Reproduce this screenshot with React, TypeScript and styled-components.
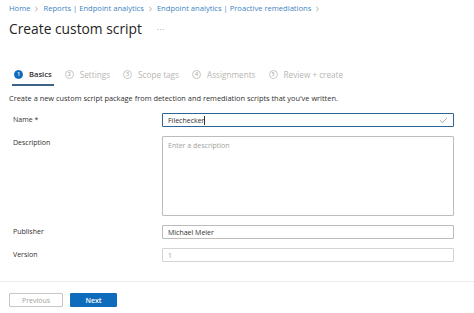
import React from "react";
import styled, { createGlobalStyle } from "styled-components";

const GlobalStyle = createGlobalStyle`
  html, body {
    margin: 0;
    padding: 0;
    background: #ffffff;
  }
  body {
    font-family: "Open Sans", "Noto Sans", "Liberation Sans", sans-serif;
    color: #323130;
  }
`;

const steps = [
  { n: 1, label: "Basics", active: true },
  { n: 2, label: "Settings", active: false },
  { n: 3, label: "Scope tags", active: false },
  { n: 4, label: "Assignments", active: false },
  { n: 5, label: "Review + create", active: false },
];

const crumbs = [
  "Home",
  "Reports | Endpoint analytics",
  "Endpoint analytics | Proactive remediations",
];

const Chevron = () => (
  <svg width="5" height="6" viewBox="0 0 5 6">
    <path d="M1.2 0.8 L3.6 3 L1.2 5.2" fill="none" stroke="#a19f9d" strokeWidth="0.8" />
  </svg>
);

const CheckMark = () => (
  <svg width="9" height="7" viewBox="0 0 9 7">
    <path d="M1 3.4 L3.3 5.6 L8 1" fill="none" stroke="#a19f9d" strokeWidth="0.9" />
  </svg>
);

const App = () => {
  return (
    <>
      <GlobalStyle />
      <Page>
        <Main>
          <Breadcrumb>
            {crumbs.map((c) => (
              <React.Fragment key={c}>
                <Crumb>{c}</Crumb>
                <Chevron />
              </React.Fragment>
            ))}
          </Breadcrumb>
          <TitleRow>
            <Title>Create custom script</Title>
            <More>···</More>
          </TitleRow>
          <Steps>
            {steps.map((s) => (
              <Step key={s.n} active={s.active}>
                <StepNum active={s.active}>{s.n}</StepNum>
                <StepLabel active={s.active}>{s.label}</StepLabel>
              </Step>
            ))}
          </Steps>
          <Intro>
            Create a new custom script package from detection and remediation scripts that you've
            written.
          </Intro>
          <Form>
            <Label>Name *</Label>
            <Field focused>
              <FieldText>
                Filechecker
                <Caret />
              </FieldText>
              <CheckMark />
            </Field>
            <Label>Description</Label>
            <TextArea>
              <Placeholder>Enter a description</Placeholder>
            </TextArea>
            <Label>Publisher</Label>
            <Field>
              <FieldText>Michael Meier</FieldText>
            </Field>
            <Label>Version</Label>
            <Field disabled>
              <Placeholder>1</Placeholder>
            </Field>
          </Form>
        </Main>
        <Footer>
          <Button>Previous</Button>
          <Button primary>Next</Button>
        </Footer>
      </Page>
    </>
  );
};

const Page = styled.div`
  width: 474px;
  height: 313px;
  background: #fff;
  overflow: hidden;
`;

const Main = styled.div`
  padding: 0 9px;
`;

const Breadcrumb = styled.div`
  display: flex;
  align-items: center;
  height: 16px;
  gap: 4px;
  svg {
    margin-top: 1px;
  }
`;

const Crumb = styled.span`
  font-size: 7.6px;
  color: #3e83c2;
  white-space: nowrap;
`;

const TitleRow = styled.div`
  display: flex;
  align-items: center;
  height: 24px;
`;

const Title = styled.h1`
  margin: 0;
  font-size: 13.8px;
  font-weight: 500;
  color: #252423;
`;

const More = styled.span`
  margin-left: 15px;
  font-size: 8px;
  color: #8a8886;
  letter-spacing: 0.5px;
`;

const Steps = styled.div`
  display: flex;
  margin-top: 27px;
  padding-left: 3px;
  gap: 9px;
`;

const Step = styled.div<{ active: boolean }>`
  display: flex;
  align-items: center;
  gap: 6px;
  height: 14px;
  padding: 0 2px 3px;
  border-bottom: 2px solid ${(p) => (p.active ? "#3d6384" : "transparent")};
`;

const StepNum = styled.span<{ active: boolean }>`
  width: 9px;
  height: 9px;
  box-sizing: border-box;
  border-radius: 50%;
  display: flex;
  align-items: center;
  justify-content: center;
  font-size: 5.5px;
  font-weight: 600;
  background: ${(p) => (p.active ? "#0f6cbd" : "transparent")};
  border: 0.8px solid ${(p) => (p.active ? "#0f6cbd" : "#c8c6c4")};
  color: ${(p) => (p.active ? "#fff" : "#b3b0ad")};
`;

const StepLabel = styled.span<{ active: boolean }>`
  font-size: ${(p) => (p.active ? "7.6px" : "8.2px")};
  font-weight: ${(p) => (p.active ? 600 : 400)};
  color: ${(p) => (p.active ? "#323130" : "#b8b5b2")};
  white-space: nowrap;
`;

const Intro = styled.p`
  margin: 6px 0 0;
  font-size: 7.4px;
  line-height: 12px;
  color: #323130;
  white-space: nowrap;
`;

const Form = styled.div`
  display: grid;
  grid-template-columns: 149px 292px;
  row-gap: 9px;
  margin-top: 9px;
  padding-left: 4px;
`;

const Label = styled.div`
  font-size: 7px;
  line-height: 14px;
  color: #323130;
`;

const Field = styled.div<{ focused?: boolean; disabled?: boolean }>`
  height: 14px;
  box-sizing: border-box;
  display: flex;
  align-items: center;
  justify-content: space-between;
  padding: 0 5px;
  border: 1px solid
    ${(p) => (p.focused ? "#2f6496" : p.disabled ? "#d6d4d2" : "#bebbb8")};
  border-radius: 1px;
  background: #fff;
`;

const FieldText = styled.span`
  display: flex;
  align-items: center;
  font-size: 7px;
  color: #323130;
`;

const Caret = styled.span`
  width: 1px;
  height: 9px;
  background: #323130;
`;

const Placeholder = styled.span`
  font-size: 7px;
  color: #a19f9d;
`;

const TextArea = styled.div`
  height: 80px;
  box-sizing: border-box;
  padding: 0 5px;
  border: 1px solid #bebbb8;
  border-radius: 1px;
  line-height: 11px;
`;

const Footer = styled.div`
  display: flex;
  gap: 7px;
  margin-top: 19px;
  border-top: 1px solid #edebe9;
  padding: 11px 9px 0;
`;

const Button = styled.button<{ primary?: boolean }>`
  height: 14px;
  box-sizing: border-box;
  border-radius: 1px;
  font-family: inherit;
  font-size: 7px;
  padding: 0;
  cursor: pointer;
  width: ${(p) => (p.primary ? "47px" : "54px")};
  background: ${(p) => (p.primary ? "#0f6cbd" : "#fff")};
  color: ${(p) => (p.primary ? "#fff" : "#a19f9d")};
  font-weight: ${(p) => (p.primary ? 600 : 400)};
  border: 1px solid ${(p) => (p.primary ? "#0f6cbd" : "#c8c6c4")};
`;

export default App;
